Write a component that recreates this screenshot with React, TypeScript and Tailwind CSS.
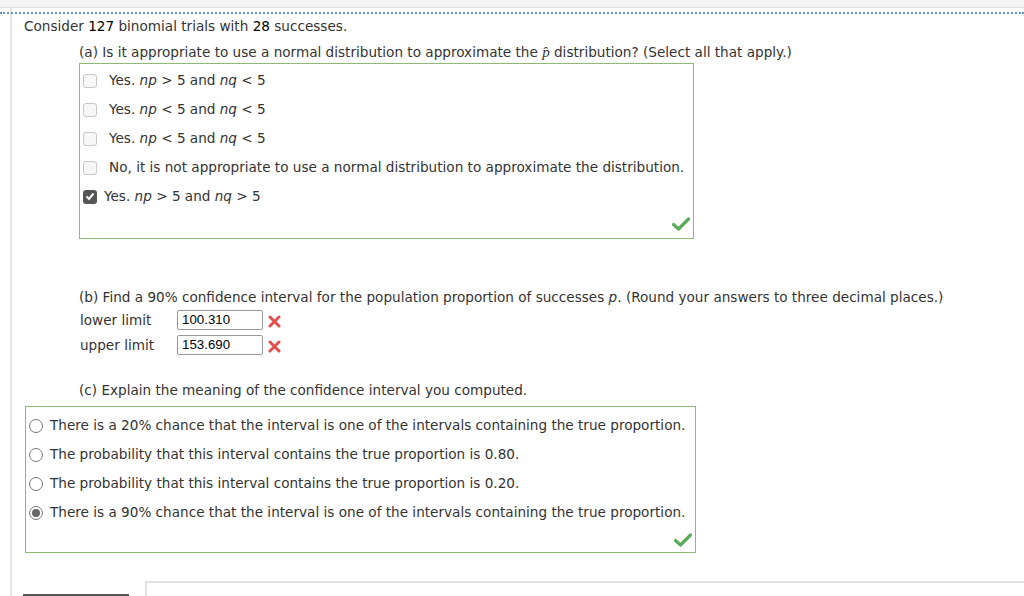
import React from 'react';

const Check = () => (
  <svg width="18" height="14" viewBox="0 0 18 14">
    <path d="M1.5 7.5 L6.5 12 L16.5 2" stroke="#5cab56" strokeWidth="3.2" fill="none" strokeLinecap="round" strokeLinejoin="round" />
  </svg>
);

const Cross = () => (
  <svg width="13" height="13" viewBox="0 0 13 13">
    <path d="M2 2 L11 11 M11 2 L2 11" stroke="#e0504c" strokeWidth="3" strokeLinecap="round" />
  </svg>
);

const Box = ({ checked }: { checked?: boolean }) =>
  checked ? (
    <span className="inline-flex items-center justify-center w-[14px] h-[14px] rounded-[3px] bg-[#555] shrink-0">
      <svg width="10" height="9" viewBox="0 0 10 9">
        <path d="M1.5 4.5 L4 7 L8.5 1.5" stroke="white" strokeWidth="2" fill="none" />
      </svg>
    </span>
  ) : (
    <span className="inline-block w-[14px] h-[14px] rounded-[3px] border border-[#c8c8c8] bg-[#f7f7f7] shrink-0" />
  );

const Radio = ({ checked }: { checked?: boolean }) => (
  <span className="inline-flex items-center justify-center w-[14px] h-[14px] rounded-full border border-[#777] bg-white shrink-0">
    {checked && <span className="w-[8px] h-[8px] rounded-full bg-[#666]" />}
  </span>
);

const App: React.FC = () => {
  const optionsA = [
    { a: '>', b: '<' },
    { a: '<', b: '<' },
    { a: '<', b: '<' }
  ];

  const optionsC = [
    'There is a 20% chance that the interval is one of the intervals containing the true proportion.',
    'The probability that this interval contains the true proportion is 0.80.',
    'The probability that this interval contains the true proportion is 0.20.',
    'There is a 90% chance that the interval is one of the intervals containing the true proportion.'
  ];

  return (
    <div className="w-[1024px] h-[596px] overflow-hidden bg-white text-[13.6px] text-[#333] font-['DejaVu_Sans',Verdana,sans-serif]">
      <div className="h-[8px] bg-[#f4f4f4] border-b border-[#dedede]" />
      <div className="flex">
        <div className="w-[10px] shrink-0" />
        <div className="w-[2px] bg-[#e4e4e4] shrink-0 h-[588px]" />
        <div className="flex-1">
          <div className="border-t-2 border-dotted border-[#5b95d6] mt-[4px] -ml-[12px]" />
          <p className="pl-[12px] mt-[3px] leading-[18px]">
            Consider <span className="text-black">127</span> binomial trials with <span className="text-black">28</span> successes.
          </p>

          <div className="pl-[67px] mt-[8px]">
            <p className="leading-[18px]">
              (a) Is it appropriate to use a normal distribution to approximate the{' '}
              <span className="italic font-['Liberation_Serif',serif] text-[15px]">p̂</span> distribution? (Select all that apply.)
            </p>
            <div className="flex flex-col mt-[2px] w-[615px] h-[176px] border border-[#8dbb74] pl-[3px] pt-[2px] pb-[7px]">
              {optionsA.map((o, i) => (
                <div key={i} className="flex items-center h-[29px]">
                  <Box />
                  <span className="ml-[12px]">
                    Yes. <i>np</i> {o.a} 5 and <i>nq</i> {o.b} 5
                  </span>
                </div>
              ))}
              <div className="flex items-center h-[29px]">
                <Box />
                <span className="ml-[12px]">
                  No, it is not appropriate to use a normal distribution to approximate the distribution.
                </span>
              </div>
              <div className="flex items-center h-[29px]">
                <Box checked />
                <span className="ml-[7px]">
                  Yes. <i>np</i> &gt; 5 and <i>nq</i> &gt; 5
                </span>
              </div>
              <div className="flex justify-end pr-[3px] mt-auto">
                <Check />
              </div>
            </div>
          </div>

          <div className="pl-[67px] mt-[49px]">
            <p className="leading-[18px]">
              (b) Find a 90% confidence interval for the population proportion of successes <i>p</i>. (Round your answers to three decimal places.)
            </p>
            <div className="flex items-center mt-[4px] h-[20px]">
              <span className="w-[98px] pl-[1px]">lower limit</span>
              <div className="w-[86px] h-[20px] border border-[#999] rounded-[2px] pl-[4px] text-[13.3px] leading-[18px] text-black font-['Liberation_Sans',Arial,sans-serif]">
                100.310
              </div>
              <span className="ml-[5px] mt-[3px]"><Cross /></span>
            </div>
            <div className="flex items-center mt-[5px] h-[20px]">
              <span className="w-[98px] pl-[1px]">upper limit</span>
              <div className="w-[86px] h-[20px] border border-[#999] rounded-[2px] pl-[4px] text-[13.3px] leading-[18px] text-black font-['Liberation_Sans',Arial,sans-serif]">
                153.690
              </div>
              <span className="ml-[5px] mt-[3px]"><Cross /></span>
            </div>
          </div>

          <div className="mt-[26px]">
            <p className="pl-[67px] leading-[18px]">(c) Explain the meaning of the confidence interval you computed.</p>
            <div className="flex flex-col ml-[13px] mt-[7px] w-[671px] h-[147px] border border-[#8dbb74] pl-[3px] pt-[4px] pb-[5px]">
              {optionsC.map((t, i) => (
                <div key={i} className="flex items-center h-[29px]">
                  <Radio checked={i === 3} />
                  <span className="ml-[7px]">{t}</span>
                </div>
              ))}
              <div className="flex justify-end pr-[3px] mt-auto">
                <Check />
              </div>
            </div>
          </div>

          <div className="flex mt-[28px]">
            <div className="w-[106px] ml-[11px] mt-[13px] border-t-2 border-[#555]" />
            <div className="flex-1 ml-[16px] border-t-2 border-l-2 border-[#e2e2e2] h-[20px]" />
          </div>
        </div>
      </div>
    </div>
  );
};

export default App;
